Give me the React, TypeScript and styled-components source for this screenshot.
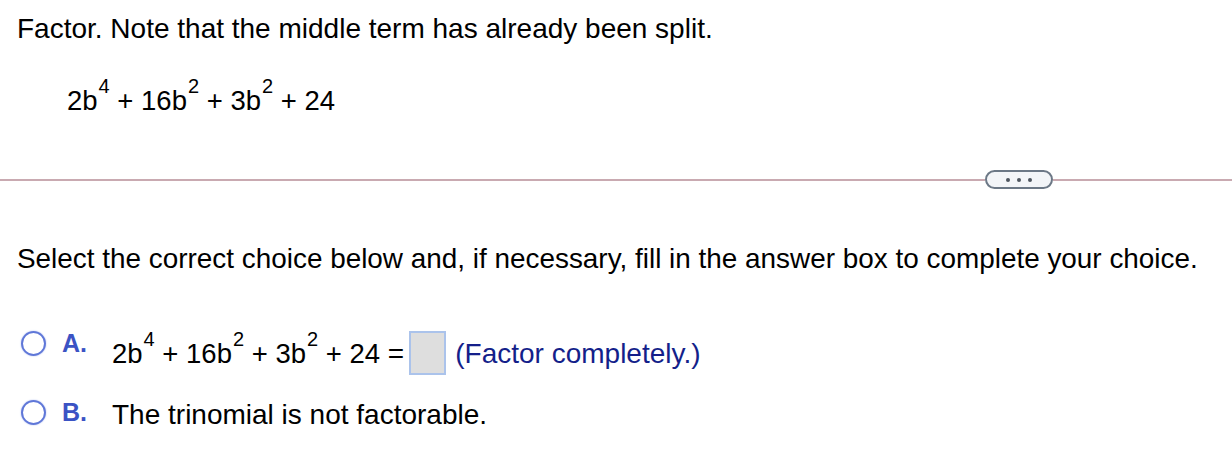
import { createGlobalStyle, styled } from "styled-components";

const GlobalStyle = createGlobalStyle`
  body {
    margin: 0;
    background: #ffffff;
    font-family: "Liberation Sans", Arial, sans-serif;
    color: #000000;
  }
`;

const Page = styled.div`
  width: 1232px;
  height: 466px;
  overflow: hidden;
  display: flex;
  flex-direction: column;
`;

const Question = styled.div`
  padding: 14px 0 0 17px;
  display: flex;
  flex-direction: column;
  gap: 42px;
`;

const Prompt = styled.div`
  font-size: 28px;
  line-height: 30px;
`;

const Expression = styled.span`
  font-size: 27.5px;
  line-height: 30px;
  white-space: nowrap;
`;

const Sup = styled.span`
  font-size: 20px;
  line-height: 0;
  vertical-align: 17px;
  margin-left: 1px;
`;

const MathLine = styled.div`
  padding-left: 50px;
  height: 30px;
`;

const Divider = styled.div`
  margin-top: 54px;
  display: flex;
  align-items: center;
`;

const Rule = styled.div<{ width?: number }>`
  height: 2px;
  background: #c9aab1;
  flex: ${(p) => (p.width ? `0 0 ${p.width}px` : "1 1 auto")};
`;

const MoreButton = styled.button`
  width: 68px;
  height: 19px;
  box-sizing: border-box;
  border: 2px solid #6c7886;
  border-radius: 10px;
  background: #f3f5f8;
  display: flex;
  align-items: center;
  justify-content: center;
  gap: 7px;
  padding: 0;
`;

const Dot = styled.span`
  width: 4px;
  height: 4px;
  border-radius: 50%;
  background: #4f5660;
`;

const Instructions = styled.div`
  margin-top: 55px;
  padding-left: 17px;
  font-size: 27.9px;
  line-height: 30px;
`;

const Choices = styled.div`
  margin-top: 57px;
  padding-left: 21px;
  display: flex;
  flex-direction: column;
  gap: 25px;
`;

const Choice = styled.div`
  display: flex;
  align-items: flex-start;
`;

const Radio = styled.span`
  width: 25px;
  height: 25px;
  box-sizing: border-box;
  border-radius: 50%;
  border: 2px solid #5f77d8;
  box-shadow: 0 0 1.5px #9aaceb;
  flex: 0 0 auto;
`;

const Letter = styled.span`
  font-weight: bold;
  font-size: 25px;
  line-height: 25px;
  color: #3b53c4;
  margin-left: 16px;
  width: 50px;
`;

const Body = styled.span`
  display: flex;
  align-items: flex-start;
  font-size: 28px;
  line-height: 30px;
`;

const Shifted = styled.span`
  margin-top: 8px;
  white-space: nowrap;
`;

const AnswerBox = styled.span`
  width: 37px;
  height: 44px;
  box-sizing: border-box;
  border: 2px solid #abc3eb;
  background: #dedede;
  margin-left: 5px;
  margin-right: 9px;
`;

const Hint = styled(Shifted)`
  color: #141f8a;
`;

function Term({ base, exp }: { base: string; exp?: string }) {
  return (
    <>
      {base}
      {exp && <Sup>{exp}</Sup>}
    </>
  );
}

function Polynomial() {
  return (
    <Expression>
      <Term base="2b" exp="4" /> + <Term base="16b" exp="2" /> +{" "}
      <Term base="3b" exp="2" /> + 24
    </Expression>
  );
}

export default function App() {
  return (
    <>
      <GlobalStyle />
      <Page>
        <Question>
          <Prompt>Factor. Note that the middle term has already been split.</Prompt>
          <MathLine>
            <Polynomial />
          </MathLine>
        </Question>
        <Divider>
          <Rule />
          <MoreButton aria-label="more">
            <Dot />
            <Dot />
            <Dot />
          </MoreButton>
          <Rule width={179} />
        </Divider>
        <Instructions>
          Select the correct choice below and, if necessary, fill in the answer box to complete your choice.
        </Instructions>
        <Choices>
          <Choice>
            <Radio />
            <Letter>A.</Letter>
            <Body>
              <Shifted>
                <Polynomial /> =
              </Shifted>
              <AnswerBox />
              <Hint>(Factor completely.)</Hint>
            </Body>
          </Choice>
          <Choice>
            <Radio />
            <Letter>B.</Letter>
            <Body>The trinomial is not factorable.</Body>
          </Choice>
        </Choices>
      </Page>
    </>
  );
}
